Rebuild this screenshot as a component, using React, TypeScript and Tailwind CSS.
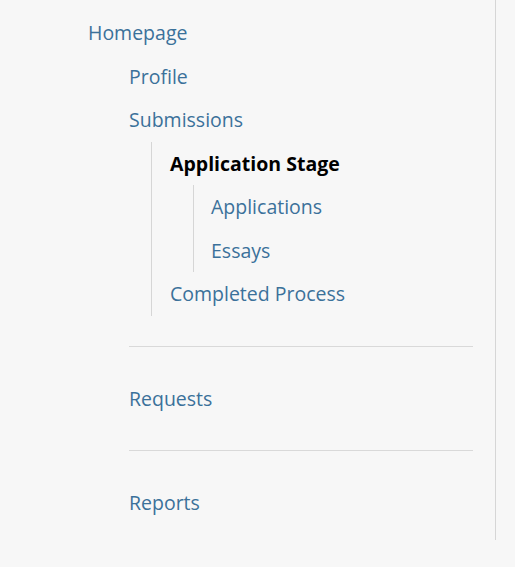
export default function App() {
  const link = "block text-[19.5px] leading-[43.5px] text-[#3b719a] whitespace-nowrap"

  return (
    <div className="min-h-[567px] bg-[#f7f7f7]" style={{ fontFamily: '"Open Sans", "Liberation Sans", sans-serif' }}>
      <nav className="w-[496px] h-[540px] border-r border-[#d6d6d6] pt-[11px] pb-[15px]">
        <a className={`${link} pl-[88px]`}>Homepage</a>
        <div className="pl-[129px] pr-[22px]">
          <a className={link}>Profile</a>
          <a className={link}>Submissions</a>
          <div className="ml-[22px] border-l border-[#d6d6d6] pl-[18px]">
            <span className="block text-[19.5px] leading-[43.5px] font-bold text-black whitespace-nowrap">
              Application Stage
            </span>
            <div className="ml-[23px] border-l border-[#d6d6d6] pl-[17px]">
              <a className={link}>Applications</a>
              <a className={link}>Essays</a>
            </div>
            <a className={link}>Completed Process</a>
          </div>

          <hr className="mt-[30px] border-t border-[#d9d9d9]" />
          <a className={`${link} my-[30px]`}>Requests</a>
          <hr className="border-t border-[#d9d9d9]" />
          <a className={`${link} mt-[30px]`}>Reports</a>
        </div>
      </nav>
    </div>
  )
}
